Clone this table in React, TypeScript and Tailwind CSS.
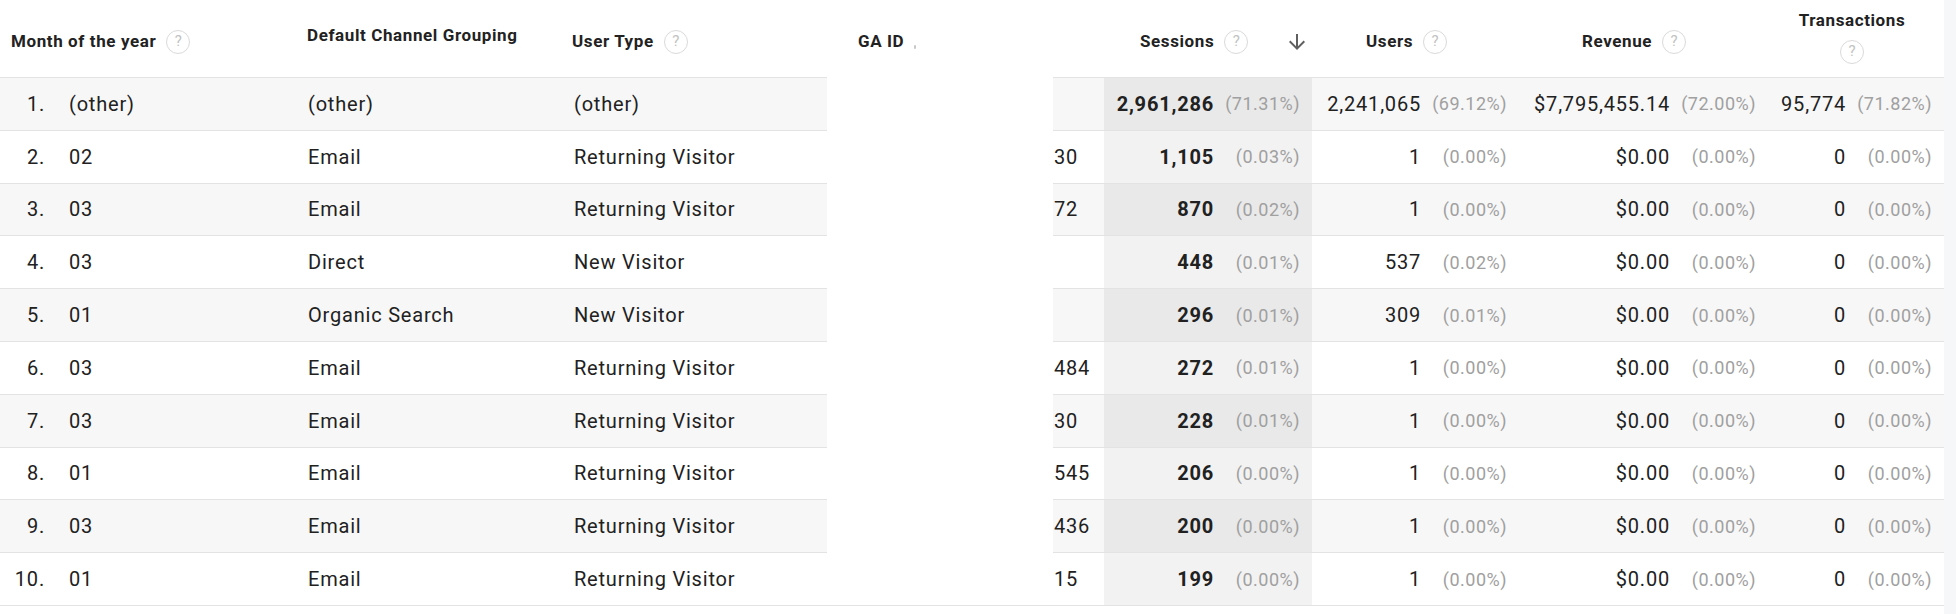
import React from 'react';

type Pair = [string, string];

type Row = {
  month: string;
  channel: string;
  userType: string;
  gaTail: string;
  sessions: Pair;
  users: Pair;
  revenue: Pair;
  transactions: Pair;
};

const zero: Pair = ['$0.00', '(0.00%)'];
const none: Pair = ['0', '(0.00%)'];

const rows: Row[] = [
  { month: '(other)', channel: '(other)', userType: '(other)', gaTail: '', sessions: ['2,961,286', '(71.31%)'], users: ['2,241,065', '(69.12%)'], revenue: ['$7,795,455.14', '(72.00%)'], transactions: ['95,774', '(71.82%)'] },
  { month: '02', channel: 'Email', userType: 'Returning Visitor', gaTail: '30', sessions: ['1,105', '(0.03%)'], users: ['1', '(0.00%)'], revenue: zero, transactions: none },
  { month: '03', channel: 'Email', userType: 'Returning Visitor', gaTail: '72', sessions: ['870', '(0.02%)'], users: ['1', '(0.00%)'], revenue: zero, transactions: none },
  { month: '03', channel: 'Direct', userType: 'New Visitor', gaTail: '', sessions: ['448', '(0.01%)'], users: ['537', '(0.02%)'], revenue: zero, transactions: none },
  { month: '01', channel: 'Organic Search', userType: 'New Visitor', gaTail: '', sessions: ['296', '(0.01%)'], users: ['309', '(0.01%)'], revenue: zero, transactions: none },
  { month: '03', channel: 'Email', userType: 'Returning Visitor', gaTail: '484', sessions: ['272', '(0.01%)'], users: ['1', '(0.00%)'], revenue: zero, transactions: none },
  { month: '03', channel: 'Email', userType: 'Returning Visitor', gaTail: '30', sessions: ['228', '(0.01%)'], users: ['1', '(0.00%)'], revenue: zero, transactions: none },
  { month: '01', channel: 'Email', userType: 'Returning Visitor', gaTail: '545', sessions: ['206', '(0.00%)'], users: ['1', '(0.00%)'], revenue: zero, transactions: none },
  { month: '03', channel: 'Email', userType: 'Returning Visitor', gaTail: '436', sessions: ['200', '(0.00%)'], users: ['1', '(0.00%)'], revenue: zero, transactions: none },
  { month: '01', channel: 'Email', userType: 'Returning Visitor', gaTail: '15', sessions: ['199', '(0.00%)'], users: ['1', '(0.00%)'], revenue: zero, transactions: none },
];

const Help = ({ className = '' }: { className?: string }) => (
  <span className={`inline-flex h-[24px] w-[24px] shrink-0 items-center justify-center rounded-full border border-[#dadada] text-[15px] font-normal leading-none tracking-normal text-[#c2c2c2] ${className}`}>
    ?
  </span>
);

const Metric = ({ pair, bold, width, bg }: { pair: Pair; bold?: boolean; width: string; bg: string }) => (
  <div className={`flex h-full ${width} ${bg} items-center justify-end border-t border-[#e3e3e3] pr-[12px]`}>
    <span className={bold ? 'font-bold' : ''}>{pair[0]}</span>
    <span className="w-[86px] text-right text-[18px] tracking-[0.5px] text-[#a0a0a0]">{pair[1]}</span>
  </div>
);

export default function App() {
  return (
    <div className="flex h-[614px] w-[1956px] overflow-hidden bg-white font-['Roboto','Liberation_Sans',sans-serif] text-[#212121]">
      <div className="flex w-[1944px] flex-col">
        {/* header */}
        <div className="flex h-[77px] shrink-0 text-[17px] font-bold tracking-[0.6px] text-[#222]">
          <div className="flex w-[296px] items-center pl-[11px] pt-[6px]">
            Month of the year
            <Help className="ml-[10px]" />
          </div>
          <div className="flex w-[266px] items-center pb-[6px] pl-[11px]">Default Channel Grouping</div>
          <div className="flex w-[284px] items-center pl-[10px] pt-[6px]">
            User Type
            <Help className="ml-[10px]" />
          </div>
          <div className="flex w-[258px] items-center pl-[12px] pt-[6px]">
            GA ID
            <span className="ml-[10px] mt-[10px] h-[4px] w-[2px] rounded-full bg-[#c8c8c8]" />
          </div>
          <div className="flex w-[208px] items-center pl-[36px] pt-[6px]">
            Sessions
            <Help className="ml-[10px]" />
            <svg viewBox="0 0 24 24" className="ml-auto mr-[3px] h-[24px] w-[24px] fill-[#5f5f5f]">
              <path d="M20 12l-1.41-1.41L13 16.17V4h-2v12.17l-5.58-5.59L4 12l8 8 8-8z" />
            </svg>
          </div>
          <div className="flex w-[207px] items-center pl-[54px] pt-[6px]">
            Users
            <Help className="ml-[10px]" />
          </div>
          <div className="flex w-[249px] items-center pl-[63px] pt-[6px]">
            Revenue
            <Help className="ml-[10px]" />
          </div>
          <div className="flex w-[176px] flex-col items-center pr-[8px] pt-[8px]">
            <span>Transactions</span>
            <Help className="mt-[6px]" />
          </div>
        </div>

        {/* rows */}
        {rows.map((r, i) => {
          const striped = i % 2 === 0;
          const bg = striped ? 'bg-[#f7f7f7]' : 'bg-white';
          const sessBg = striped ? 'bg-[#e9e9e9]' : 'bg-[#f2f2f2]';
          return (
            <div key={i} className="flex h-[52.8px] shrink-0 text-[20px] tracking-[0.8px]">
              <div className={`flex w-[827px] items-center border-t border-[#e3e3e3] ${bg}`}>
                <div className="flex w-[296px] items-center">
                  <span className="w-[45px] text-right">{i + 1}.</span>
                  <span className="ml-[24px]">{r.month}</span>
                </div>
                <div className="w-[266px] pl-[12px]">{r.channel}</div>
                <div className="w-[265px] pl-[12px]">{r.userType}</div>
              </div>
              <div className="w-[226px] bg-white" />
              <div className={`flex w-[51px] items-center overflow-hidden border-t border-[#e3e3e3] pl-[1px] ${bg}`}>{r.gaTail}</div>
              <Metric pair={r.sessions} bold width="w-[208px]" bg={sessBg} />
              <Metric pair={r.users} width="w-[207px]" bg={bg} />
              <Metric pair={r.revenue} width="w-[249px]" bg={bg} />
              <Metric pair={r.transactions} width="w-[176px]" bg={bg} />
            </div>
          );
        })}
        <div className="h-px w-full shrink-0 bg-[#e3e3e3]" />
      </div>
      <div className="w-[12px] bg-[#f6f7f9]" />
    </div>
  );
}
